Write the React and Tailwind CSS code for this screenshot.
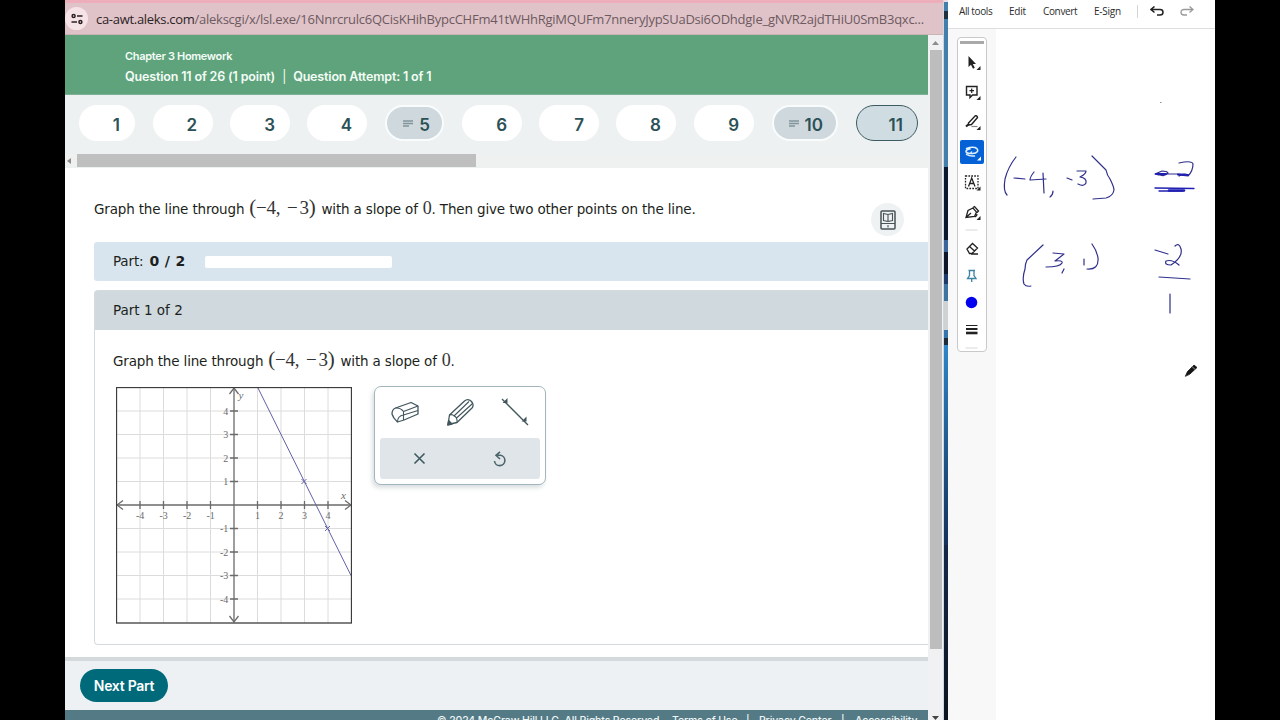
import clsx from "clsx";

const questions = [
  { n: 1, box: "ml-[14px] w-[56px]", text: "pr-[15px]" },
  { n: 2, box: "ml-[18px] w-[60px]", text: "pr-[16px]" },
  { n: 3, box: "ml-[17px] w-[60px]", text: "pr-[15px]" },
  { n: 4, box: "ml-[17px] w-[60px]", text: "pr-[15px]" },
  { n: 5, box: "ml-[18px] w-[59px]", text: "pr-[12px]", status: "partial" },
  { n: 6, box: "ml-[18px] w-[60px]", text: "pr-[15px]" },
  { n: 7, box: "ml-[17px] w-[60px]", text: "pr-[15px]" },
  { n: 8, box: "ml-[17px] w-[60px]", text: "pr-[15px]" },
  { n: 9, box: "ml-[18px] w-[60px]", text: "pr-[15px]" },
  { n: 10, box: "ml-[18px] w-[66px]", text: "pr-[13px]", status: "partial" },
  { n: 11, box: "ml-[18px] w-[62px]", text: "pr-[14px]", status: "current" },
];

const ticks = [-4, -3, -2, -1, 1, 2, 3, 4];

function UrlBar() {
  return (
    <div className="h-[35px] shrink-0 bg-[#dfc3c9] border-t-[3px] border-t-[#eeadba] border-b border-b-[#c9b3b5] flex items-center">
      <div className="w-[23px] h-[23px] shrink-0 rounded-full bg-[#f5e3e7] flex items-center justify-center">
        <svg width="12" height="12" viewBox="0 0 12 12" fill="none" stroke="#2b2224" strokeWidth="1.5">
          <circle cx="2.6" cy="3" r="1.5" />
          <path d="M6 3h5.5M0.500 9H6" />
          <circle cx="9.400" cy="9" r="1.5" />
        </svg>
      </div>
      <p className="ml-2 font-['Open_Sans',sans-serif] text-[13px] leading-[20px] tracking-[-0.25px] whitespace-nowrap text-[#6d5a5e]">
        <span className="text-[#2c2325] tracking-[-0.3px]">ca-awt.aleks.com</span>
        /alekscgi/x/lsl.exe/16Nnrcrulc6QCisKHihBypcCHFm41tWHhRgiMQUFm7nneryJypSUaDsi6ODhdgIe_gNVR2ajdTHiU0SmB3qxc...
      </p>
    </div>
  );
}

function QuestionPill({ q }) {
  return (
    <div
      className={clsx(
        "h-9 shrink-0 rounded-full flex items-center justify-end text-[17px] font-semibold text-[#2b5157]",
        q.box,
        q.text,
        !q.status && "bg-white",
        q.status === "partial" && "bg-[#cfd8dd] border-2 border-[#f9fcfd]",
        q.status === "current" && "bg-[#cfdce1] border border-[#3d5b62]"
      )}
    >
      {q.status === "partial" && (
        <svg className="mr-[6px] mt-px" width="10" height="7" viewBox="0 0 10 7" stroke="#82949c" strokeWidth="1.3">
          <path d="M0 1h10M0 3.500h10M0 6h6" />
        </svg>
      )}
      <span className="mt-[3px] leading-5">{q.n}</span>
    </div>
  );
}

function Point() {
  return (
    <span className="font-['Liberation_Serif',serif] text-[19px] leading-none text-[#333] ml-[5px] mr-[6px] tracking-[-0.3px]">
      <span className="text-[21px]">(</span>−4,<span className="ml-[7px]">−</span>
      <span className="ml-[2px]">3</span>
      <span className="text-[21px]">)</span>
    </span>
  );
}

function Zero() {
  return <span className="font-['Liberation_Serif',serif] text-[18px] leading-none text-[#333] ml-[5px]">0</span>;
}

function Graph() {
  const u = 23.5;
  const c = 118;
  return (
    <svg className="mt-px" width="236" height="237" viewBox="0 0 236 237" fill="none">
      {ticks.map((t) => (
        <g key={t} stroke="#dcdcdc">
          <path d={`M${c + t * u} 0V236M0 ${c - t * u}H236`} />
        </g>
      ))}
      <g stroke="#6b6b6b" strokeWidth="1.3">
        <path d="M118 1V235M1 118H235" />
        <path d="M113.500 7l4.500-6l4.500 6M113.500 229l4.500 6l4.500-6M7 113.500l-6 4.500l6 4.500M229 113.500l6 4.500l-6 4.500" />
        {ticks.map((t) => (
          <path key={t} d={`M${c + t * u} 114V122M114 ${c - t * u}H122`} />
        ))}
      </g>
      <g fill="#6a6a6a" fontFamily="Liberation Serif, serif" fontSize="10">
        {ticks.map((t) => (
          <g key={t}>
            <text x={c + t * u} y="131.500" textAnchor="middle">{t}</text>
            <text x="112" y={c - t * u + 3.5} textAnchor="end">{t}</text>
          </g>
        ))}
        <text x="122.500" y="11.500" fontStyle="italic" fontSize="11">y</text>
        <text x="225" y="112" fontStyle="italic" fontSize="11">x</text>
      </g>
      <g stroke="#6262a8">
        <path d="M141.500 0L235 188.500" />
        <path d="M185.500 92l5 5M190.500 92l-5 5M209 139l5 5M214 139l-5 5" />
      </g>
      <rect x="0.500" y="0.500" width="235" height="235.500" stroke="#3c3c3c" strokeWidth="1.3" />
    </svg>
  );
}

function GraphTools() {
  return (
    <div className="w-[172px] h-[99px] rounded-[7px] border border-[#a3b5bd] bg-white shadow-[-2px_3px_4px_rgba(110,130,140,0.25)] flex flex-col px-[5px] pb-[5px]">
      <div className="h-[51px] flex items-center">
        <svg width="160" height="50" viewBox="380 387 160 50" fill="none" stroke="#41565d" strokeWidth="1.3" strokeLinejoin="round">
          <path d="M392 413q0-4.500 3.500-6L411 401.500l7 3.500v8l-14 6l-6.500 2q-4.500-4-5.500-8z" />
          <path d="M395.500 407q5-.5 8 3.500v8.500M403.500 410.500L418 405M397.500 421q0-6 6-7l14.500-4.500" strokeWidth="1.100" />
          <path d="M448 423.500l1.500-9.500l15-14q3.500-3 7 .5q2.500 3 1 6l-15.500 15z" />
          <path d="M449.500 414q3-1 4.500 1q3.500 1 3 6.500M454 415l15-14.500M456 417.500l16-14.500" strokeWidth="1.100" />
          <path d="M447.800 424l.8-4.500l3.400 3.500z" fill="#41565d" />
          <path d="M502 398l26 26" />
          <path d="M502.500 402h5v-5zM521.500 420.500h5v-5z" fill="#41565d" strokeWidth="0" />
        </svg>
      </div>
      <div className="flex-1 rounded-[3px] bg-[#dfe5e8] flex items-center justify-between pl-[33px] pr-[33px]">
        <svg width="13" height="13" viewBox="0 0 13 13" stroke="#3f5961" strokeWidth="1.6">
          <path d="M1.500 1.500l10 10M11.500 1.500l-10 10" />
        </svg>
        <svg width="14" height="16" viewBox="0 0 14 16" fill="none" stroke="#4c646b" strokeWidth="1.6">
          <path d="M7 0.800L3 4.300l4 3.700M3 4.300h4.500a5.200 5.200 0 1 1-6 5.700" />
        </svg>
      </div>
    </div>
  );
}

function Homework() {
  return (
    <main className="w-[863px] shrink-0 overflow-hidden flex flex-col bg-white">
      <header className="h-[60px] shrink-0 bg-[#5ea37c] border-b border-[#7fb196] pl-[60px] pt-[14px] font-['Inter',sans-serif] font-semibold text-[#f4fcf6] whitespace-nowrap">
        <p className="text-[11px] leading-[15px] tracking-[-0.32px]">Chapter 3 Homework</p>
        <p className="mt-[4px] text-[12.5px] leading-[17px] tracking-[-0.16px]">
          Question 11 of 26 (1 point)
          <span className="mx-[7px] font-normal">|</span>
          Question Attempt: 1 of 1
        </p>
      </header>
      <nav className="h-[73px] shrink-0 bg-[#eef1f2] pt-[10px]">
        <div className="flex font-['Inter',sans-serif]">
          {questions.map((q) => (
            <QuestionPill key={q.n} q={q} />
          ))}
        </div>
        <div className="mt-[13px] flex items-center bg-[#eff0f0]">
          <svg className="ml-[2px] mr-[6px]" width="4" height="6" viewBox="0 0 4 6" fill="#8b8b8b">
            <path d="M4 0v6L0 3z" />
          </svg>
          <div className="w-[399px] h-[13px] bg-[#bfbfbf]" />
        </div>
      </nav>

      <section className="h-[489px] shrink-0 pl-[29px] font-['DejaVu_Sans',sans-serif] text-[13.5px] tracking-[-0.16px] text-[#1c1f20]">
        <div className="h-[74px] flex justify-between pr-[24px]">
          <p className="mt-[29px] h-6 leading-6 whitespace-nowrap">
            Graph the line through
            <Point />
            with a slope of
            <Zero />. Then give two other points on the line.
          </p>
          <div className="mt-[35px] w-[33px] h-[33px] rounded-full bg-[#eff2f2] flex items-center justify-center">
            <svg width="16" height="20" viewBox="0 0 16 20" fill="none" stroke="#4a5356" strokeWidth="1.5">
              <rect x="1" y="1" width="14" height="18" rx="1" />
              <path d="M3.500 3.500l4.500 1l4.500-1v7l-4.500 1l-4.500-1zM8 4.500v7M1 13.500h14M8 15v2.500" strokeWidth="1.1" />
            </svg>
          </div>
        </div>
        <div className="h-[39px] rounded-l-[3px] bg-[#d9e5ee] flex items-center pl-[19px]">
          <span>Part:</span>
          <b className="ml-[6px] w-[37px] text-[14px] tracking-[0.4px] whitespace-nowrap">0 / 2</b>
          <div className="ml-[19px] w-[187px] h-[12px] rounded-[2px] bg-white" />
        </div>
        <div className="mt-[9px] h-[355px] border border-r-0 border-[#d4dbdf] rounded-l-[4px]">
          <h2 className="h-[39px] bg-[#cfd9de] pl-[18px] leading-[39px] tracking-normal">Part 1 of 2</h2>
          <div className="pl-[18px]">
            <p className="pt-[19px] h-[56px] leading-6 whitespace-nowrap">
              Graph the line through
              <Point />
              with a slope of
              <Zero />.
            </p>
            <div className="pl-[3px] flex gap-[22px]">
              <Graph />
              <GraphTools />
            </div>
          </div>
        </div>
      </section>

      <div className="h-[53px] shrink-0 bg-[#edf1f3] border-t-4 border-[#d4d9dc] pt-2 pl-[15px]">
        <button className="w-[88px] h-[33px] rounded-full bg-[#006a7b] text-white font-['Inter',sans-serif] font-semibold text-[14px] tracking-[-0.3px] whitespace-nowrap">
          Next Part
        </button>
      </div>
      <footer className="h-[10px] shrink-0 overflow-hidden bg-[#547a85] pl-[372px] pt-[3px] flex font-['Inter',sans-serif] font-medium text-[10.5px] leading-[15px] tracking-[-0.12px] text-[#eef5f6] whitespace-nowrap">
        <span className="w-[235px]">© 2024 McGraw Hill LLC. All Rights Reserved.</span>
        <span className="w-[74px]">Terms of Use</span>
        <span className="w-[13px]">|</span>
        <span className="w-[82px]">Privacy Center</span>
        <span className="w-[14px]">|</span>
        <span>Accessibility</span>
      </footer>
    </main>
  );
}

function Scrollbar() {
  return (
    <div className="w-[15px] bg-[#f1f0f2] flex flex-col items-center">
      <svg className="mt-[6px]" width="7" height="4" viewBox="0 0 7 4" fill="#8c8c8c">
        <path d="M0 4h7L3.500 0z" />
      </svg>
      <div className="mt-[5px] w-[12px] h-[600px] bg-[#bdbdbd]" />
      <svg className="mt-[67px]" width="7" height="4" viewBox="0 0 7 4" fill="#444">
        <path d="M0 0h7L3.500 4z" />
      </svg>
    </div>
  );
}

// Slice of the desktop visible between the two windows
function DesktopStrip() {
  return (
    <div className="w-[5px] shrink-0 flex flex-col border-l border-[#cfd6dc] bg-[#14243c]">
      <div className="h-[2px] bg-[#f0dbe2]" />
      <div className="h-[9px] bg-[#437fad]" />
      <div className="h-[8px] bg-[#1f3140]" />
      <div className="h-[148px] bg-[#437fad]" />
      <div className="h-[73px] bg-[#0b1930]" />
      <div className="h-[12px] bg-[#3b659b]" />
      <div className="h-[22px] bg-[#0e1629]" />
      <div className="h-[10px] bg-[#1d3b66]" />
      <div className="h-[17px] bg-[#3f74a0]" />
      <div className="h-[29px] bg-[#cfd2d3]" />
      <div className="h-[8px] bg-[#3575ad]" />
      <div className="h-[7px] bg-[#1c2c3a]" />
      <div className="h-[200px] bg-linear-to-b from-[#2e86c9] to-[#14315a]" />
      <div className="flex-1 bg-linear-to-b from-[#14294a] to-[#0c141f]" />
    </div>
  );
}

function MoreMark({ x, y, fill = "#222" }) {
  return <path d={`M${x} ${y}v-4l-4 4z`} fill={fill} stroke="none" />;
}

function ToolPalette() {
  return (
    <div className="w-[30px] h-[315px] rounded-[4px] border border-[#c9c9c9] bg-white flex flex-col items-center pt-[3px]">
      <div className="w-6 h-[3px] shrink-0 bg-[#a9a9a9]" />
      <svg className="shrink-0" width="28" height="96" viewBox="958 44 28 96" fill="none" stroke="#222" strokeWidth="1.4">
        <path d="M968.500 56v11l2.500-2.300l2 4l1.800-1l-2-3.700h3.200z" fill="#222" stroke="none" />
        <MoreMark x={980.5} y={70} />
        <path d="M966.500 86.500h10.500v8.500h-4.500l-2.500 2.500v-2.500h-3.500z" />
        <path d="M971.700 88.500v4.500M969.500 90.700h4.500" strokeWidth="1.2" />
        <MoreMark x={980.5} y={100} />
        <path d="M968.500 123l6.500-7q2-.8 2.500 1.500l-6 7l-3 .5z" />
        <path d="M966 126.500l3-2.500" strokeWidth="2.200" />
        <path d="M971.500 126.500h6" stroke="#888" strokeWidth="1.2" />
        <MoreMark x={980.5} y={130} />
      </svg>
      <div className="w-6 h-6 shrink-0 rounded-[2px] bg-[#0562d6]">
        <svg width="24" height="24" viewBox="960 140 24 24" fill="none" stroke="#dff0ff" strokeWidth="1.5" strokeLinecap="round">
          <path d="M966.500 148.500q5-2 8.500-1q3.500 1.500 2.500 4q-1.500 2-5 2q-2.500-.3-1-1.500M972 153.500q-5.500.5-6-2q0-2 4-2.500M966.500 154.500q3 2 8 1.500" />
          <MoreMark x={981} y={160.5} fill="#fff" />
        </svg>
      </div>
      <svg className="shrink-0" width="28" height="185" viewBox="958 164 28 185" fill="none" stroke="#222" strokeWidth="1.3">
        <rect x="965.500" y="176" width="12.500" height="12.500" strokeDasharray="1.7 1.2" />
        <path d="M968.500 186.500l3.200-8.500l3.300 8.500M969.500 183.500h4.500" />
        <MoreMark x={980.5} y={190.5} />
        <path d="M966 217.500l2-7l5-2.500l3.500 4l-2 4.500zM966 217.500l5-4.500M973 207.500l1.500-1l4 4.500l-1.500 1.500M975 217q2-1 2-3" />
        <MoreMark x={980.5} y={220} />
        <path d="M965.500 230h12M965.500 348h12" stroke="#d8d8d8" strokeWidth="1" />
        <path d="M967 249l5.500-5.500l5 4.500l-5.500 5.500h-2.500zM969.500 246.500l5 4.500M971 254h7" />
        <path d="M968.500 270.500h6.500M969.500 270.500v5l-2 3h8.500l-2-3v-5M971.700 278.500v3.500" stroke="#3d82a3" />
        <circle cx="971.500" cy="302.500" r="5.800" fill="#0202ee" stroke="none" />
        <path d="M966 325.500h11.500" strokeWidth="1" />
        <path d="M966 329h11.500" strokeWidth="2" />
        <path d="M966 333h11.500" strokeWidth="2.600" />
      </svg>
    </div>
  );
}

function Handwriting() {
  return (
    <svg width="219" height="691" viewBox="996 29 219 691" fill="none" stroke="#2f2f8c" strokeWidth="1.2" strokeLinecap="round" strokeLinejoin="round">
      <path d="M1016 157q-8 10-11 22q-2 12 2 16" />
      <path d="M1014 178l11 1M1034 172q-4 5-4 8l16-1M1043 173l1 20M1053 191q0 4-3 6" />
      <path d="M1067 178l5 2M1077 171h9q0 3-6 6q7 1 6 6q-2 4-8 1" />
      <path d="M1092 156l14 14q1 5 4 9q4 8 4 11q-1 6-8 8l-13 1" />
      <path d="M1179 163q13-3 14 1q0 7-5 12l-9-1" />
      <path d="M1155 174l7-3q5 0 6 2q-3 4-8 2M1158 175l10-1h10l10 1M1179 176q4-3 9-1" />
      <path d="M1156 174h10M1178 174.500l10 .5" strokeWidth="2.200" stroke="#1f1fb4" />
      <path d="M1155 188l39 .5M1159 191h24" strokeWidth="1.300" stroke="#1f1fb4" />
      <path d="M1169 190.500h15" strokeWidth="2.600" stroke="#1f1fb4" />
      <path d="M1043 245l-16 15q-2 4-2 9q-3 9-1 15q2 3 7 2" />
      <path d="M1053 253l11 1l-9 7q8-1 7 2q-2 4-16 4M1064 269l-2 4M1084 259v6M1092 244q5 7 6 14q1 12-11 11" />
      <path d="M1155 250l13 4M1175 246q4-4 6 3q2 8-10 16q-7 0-5-4q6-2 13 4M1159 277l31 2M1170 294v19" />
      <path d="M1160.500 102.500h.5" stroke="#888" />
      <path d="M1185.500 376l2-4.500l6.500-6.500l3 2.500l-7 6.500z" fill="#151515" stroke="#151515" strokeWidth="0.800" />
      <path d="M1192 366.500l3 3" stroke="#bbb" strokeWidth="0.800" />
    </svg>
  );
}

function Acrobat() {
  return (
    <div className="w-[267px] shrink-0 bg-white flex flex-col">
      <div className="h-[29px] shrink-0 border-b border-[#dedede] pl-[11px] pb-[6px] flex items-center font-['Open_Sans',sans-serif] text-[10px] tracking-[-0.25px] text-[#2c2c2c] whitespace-nowrap">
        <span className="w-[50px] tracking-[-0.4px]">All tools</span>
        <span className="w-[34px]">Edit</span>
        <span className="w-[51px] tracking-[-0.35px]">Convert</span>
        <span className="w-[43px]">E-Sign</span>
        <div className="w-px h-[13px] bg-[#d4d4d4]" />
        <svg className="ml-[12px]" width="14" height="10" viewBox="0 0 14 10" fill="none" stroke="#222" strokeWidth="1.500">
          <path d="M4.500 0.500L1 3.500l3.500 3M1 3.500h9q3 0 3 2.700q0 2.800-3 2.800h-3" />
        </svg>
        <svg className="ml-[16px]" width="14" height="10" viewBox="0 0 14 10" fill="none" stroke="#9a9a9a" strokeWidth="1.300">
          <path d="M9.500 0.500L13 3.500l-3.500 3M13 3.500H4q-3 0-3 2.700q0 2.800 3 2.800h3" />
        </svg>
      </div>
      <div className="flex-1 flex">
        <div className="w-[48px] bg-[#f8f8f8] pl-[9px] pt-[8px]">
          <ToolPalette />
        </div>
        <Handwriting />
      </div>
    </div>
  );
}

export default function App() {
  return (
    <div className="w-[1280px] h-[720px] overflow-hidden bg-black pl-[65px] flex">
      <div className="w-[878px] shrink-0 flex flex-col overflow-hidden">
        <UrlBar />
        <div className="flex-1 min-h-0 flex">
          <Homework />
          <Scrollbar />
        </div>
      </div>
      <DesktopStrip />
      <Acrobat />
    </div>
  );
}
